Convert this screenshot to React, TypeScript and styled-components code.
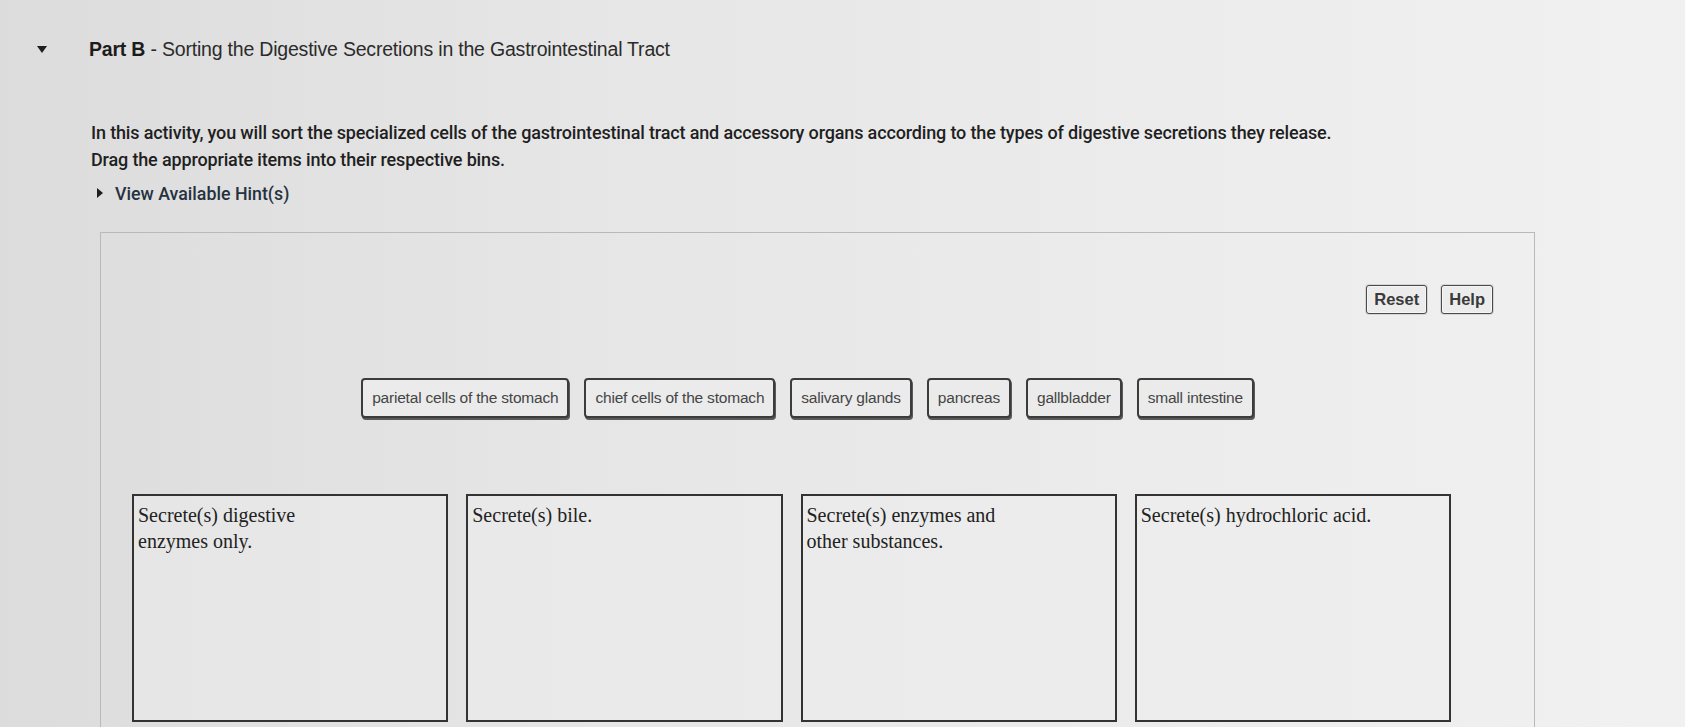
import React from 'react'
import styled, { createGlobalStyle } from 'styled-components'

const GlobalStyle = createGlobalStyle`
  html, body {
    margin: 0;
    padding: 0;
    overflow: hidden;
  }
  body {
    background: linear-gradient(90deg, #dcdcdc 0%, #e6e6e6 35%, #ececec 70%, #f1f1f1 100%);
    font-family: "Liberation Sans", Arial, sans-serif;
    color: #2a2a2a;
  }
`

const Page = styled.div`
  width: 1685px;
  height: 727px;
  padding-top: 37px;
  box-sizing: border-box;
`

const PartHeader = styled.div`
  display: flex;
  align-items: center;
  height: 24px;
  padding-left: 37px;
`

const Caret = styled.span<{ $open?: boolean; $size?: number }>`
  display: inline-block;
  flex: none;
  width: 0;
  height: 0;
  ${({ $open, $size = 6 }) =>
    $open
      ? `border-left: ${$size}px solid transparent;
         border-right: ${$size}px solid transparent;
         border-top: ${$size + 2}px solid #1e1e1e;`
      : `border-top: ${$size}px solid transparent;
         border-bottom: ${$size}px solid transparent;
         border-left: ${$size + 1}px solid #1e1e1e;`}
`

const Title = styled.h2`
  margin: 0 0 0 42px;
  font-size: 19.5px;
  font-weight: normal;
  color: #2b2b2b;
  letter-spacing: -0.2px;

  b {
    font-weight: bold;
    color: #1c1c1c;
  }
`

const Body = styled.div`
  padding-left: 91px;
`

const Intro = styled.p`
  margin: 58px 0 0;
  font-family: Roboto, "Liberation Sans", sans-serif;
  font-weight: 500;
  font-size: 18px;
  line-height: 27px;
  color: #1f1f1f;
  letter-spacing: -0.15px;
`

const HintToggle = styled.div`
  display: flex;
  align-items: center;
  gap: 12px;
  margin-top: 9px;
  height: 22px;
  padding-left: 6px;
  font-family: Roboto, "Liberation Sans", sans-serif;
  font-weight: 500;
  font-size: 17.8px;
  color: #26323f;
`

const Activity = styled.div`
  margin: 28px 0 0 100px;
  width: 1435px;
  height: 520px;
  border: 1px solid #b9b9b9;
  box-sizing: border-box;
  padding: 52px 41px 0 31px;
`

const Toolbar = styled.div`
  display: flex;
  justify-content: flex-end;
  gap: 14px;
`

const ToolButton = styled.button`
  height: 29px;
  padding: 0 7px;
  font-family: "Liberation Sans", Arial, sans-serif;
  font-size: 16.5px;
  font-weight: bold;
  color: #3a3a3a;
  background: #ececec;
  border: 1px solid #4a4a4a;
  border-radius: 3px;
  box-shadow: 0 0 0 1px #d6d6d6, inset 0 0 0 1px #f6f6f6;
  cursor: pointer;
`

const ChipRow = styled.div`
  display: flex;
  justify-content: center;
  gap: 15px;
  margin-top: 64px;
  padding-right: 10px;
`

const Chip = styled.div`
  height: 36px;
  display: flex;
  align-items: center;
  padding: 0 9px;
  font-family: "Liberation Sans", Arial, sans-serif;
  font-size: 15.5px;
  color: #454545;
  background: #ebebeb;
  border: 2px solid #3c3c3c;
  border-radius: 4px;
  box-shadow: 1px 2px 0 #5a5a5a;
  white-space: nowrap;
  letter-spacing: -0.2px;
`

const BinRow = styled.div`
  display: grid;
  grid-template-columns: repeat(4, 1fr);
  gap: 18px;
  margin: 76px 42px 0 0;
`

const Bin = styled.div`
  height: 228px;
  border: 2px solid #333;
  box-sizing: border-box;
  padding: 6px 4px;
  background: rgba(238, 238, 238, 0.5);
`

const BinLabel = styled.div`
  font-family: "Liberation Serif", "Times New Roman", serif;
  font-size: 20px;
  line-height: 26px;
  color: #222;
`

const items = [
  'parietal cells of the stomach',
  'chief cells of the stomach',
  'salivary glands',
  'pancreas',
  'gallbladder',
  'small intestine',
]

const bins = [
  ['Secrete(s) digestive', 'enzymes only.'],
  ['Secrete(s) bile.'],
  ['Secrete(s) enzymes and', 'other substances.'],
  ['Secrete(s) hydrochloric acid.'],
]

export default function App() {
  return (
    <>
      <GlobalStyle />
      <Page>
        <PartHeader>
          <Caret $open $size={5} />
          <Title>
            <b>Part B</b> - Sorting the Digestive Secretions in the Gastrointestinal Tract
          </Title>
        </PartHeader>
        <Body>
          <Intro>
            In this activity, you will sort the specialized cells of the gastrointestinal tract and accessory organs
            according to the types of digestive secretions they release.
            <br />
            Drag the appropriate items into their respective bins.
          </Intro>
          <HintToggle>
            <Caret $size={5} />
            View Available Hint(s)
          </HintToggle>
        </Body>
        <Activity>
          <Toolbar>
            <ToolButton>Reset</ToolButton>
            <ToolButton>Help</ToolButton>
          </Toolbar>
          <ChipRow>
            {items.map((it) => (
              <Chip key={it}>{it}</Chip>
            ))}
          </ChipRow>
          <BinRow>
            {bins.map((lines, i) => (
              <Bin key={i}>
                <BinLabel>
                  {lines.map((l, j) => (
                    <div key={j}>{l}</div>
                  ))}
                </BinLabel>
              </Bin>
            ))}
          </BinRow>
        </Activity>
      </Page>
    </>
  )
}
